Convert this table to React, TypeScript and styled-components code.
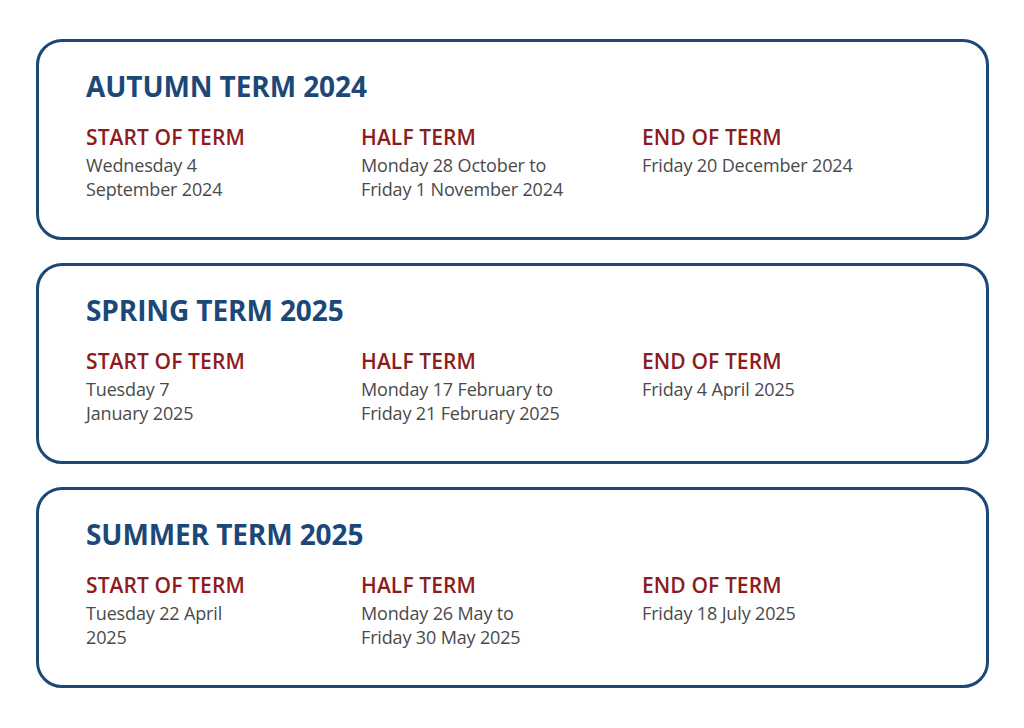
import styled, { createGlobalStyle } from 'styled-components';

const GlobalStyle = createGlobalStyle`
    html, body {
        margin: 0;
        padding: 0;
        background: #ffffff;
    }
    body {
        font-family: "Open Sans", "Noto Sans", sans-serif;
    }
`;

const Page = styled.div`
    width: 1024px;
    height: 728px;
    box-sizing: border-box;
    padding: 39px 35px 0 36px;
    display: flex;
    flex-direction: column;
    gap: 23px;
`;

const Card = styled.section`
    height: 201px;
    box-sizing: border-box;
    border: 3.5px solid #1c4877;
    border-radius: 26px;
    padding: 26px 20px 0 47px;
`;

const Title = styled.h2`
    margin: 0 0 20px;
    font-size: 28px;
    line-height: 36px;
    font-weight: 700;
    letter-spacing: -0.1px;
    color: #1c4877;
`;

const Columns = styled.div`
    display: grid;
    grid-template-columns: 275px 281px 1fr;
`;

const Column = styled.div`
    display: flex;
    flex-direction: column;
`;

const Heading = styled.h3`
    margin: 0 0 3px;
    font-size: 21px;
    line-height: 26px;
    font-weight: 600;
    letter-spacing: 0.1px;
    color: #8d1b20;
`;

const Dates = styled.p`
    margin: 0;
    font-size: 18px;
    line-height: 24px;
    font-weight: 400;
    letter-spacing: -0.15px;
    color: #4a4a4a;
`;

interface ITerm {
    name: string;
    start: string[];
    half: string[];
    end: string[];
}

const terms: ITerm[] = [
    {
        name: 'AUTUMN TERM 2024',
        start: ['Wednesday 4', 'September 2024'],
        half: ['Monday 28 October to', 'Friday 1 November 2024'],
        end: ['Friday 20 December 2024'],
    },
    {
        name: 'SPRING TERM 2025',
        start: ['Tuesday 7', 'January 2025'],
        half: ['Monday 17 February to', 'Friday 21 February 2025'],
        end: ['Friday 4 April 2025'],
    },
    {
        name: 'SUMMER TERM 2025',
        start: ['Tuesday 22 April', '2025'],
        half: ['Monday 26 May to', 'Friday 30 May 2025'],
        end: ['Friday 18 July 2025'],
    },
];

const Lines = ({ lines }: { lines: string[] }) => (
    <Dates>
        {lines.map((line, i) => (
            <span key={i}>
                {line}
                {i < lines.length - 1 && <br />}
            </span>
        ))}
    </Dates>
);

const App = () => {
    return (
        <>
            <GlobalStyle />
            <Page>
                {terms.map(term => (
                    <Card key={term.name}>
                        <Title>{term.name}</Title>
                        <Columns>
                            <Column>
                                <Heading>START OF TERM</Heading>
                                <Lines lines={term.start} />
                            </Column>
                            <Column>
                                <Heading>HALF TERM</Heading>
                                <Lines lines={term.half} />
                            </Column>
                            <Column>
                                <Heading>END OF TERM</Heading>
                                <Lines lines={term.end} />
                            </Column>
                        </Columns>
                    </Card>
                ))}
            </Page>
        </>
    );
};

export default App;
